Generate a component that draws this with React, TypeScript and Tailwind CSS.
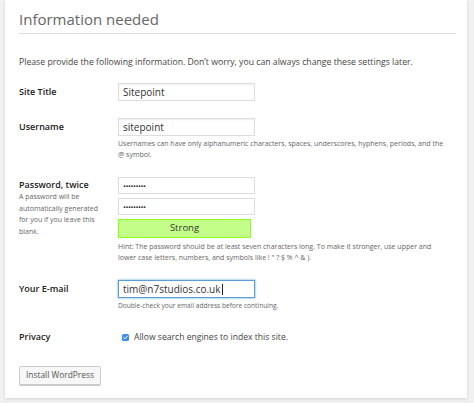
import React from 'react';

function Field({ value, focused }: { value: string; focused?: boolean }) {
  return (
    <div
      className={
        focused
          ? 'flex h-[18px] w-[137px] items-center border border-[#5b9dd9] bg-white px-[4px] text-[10px] text-[#333] shadow-[0_0_2px_rgba(30,140,190,0.8)]'
          : 'flex h-[18px] w-[137px] items-center border border-[#ddd] bg-white px-[4px] text-[10px] text-[#333] shadow-[inset_0_1px_2px_rgba(0,0,0,0.07)]'
      }
    >
      {value}
      {focused && <span className="ml-[1px] inline-block h-[11px] w-px bg-[#222]"></span>}
    </div>
  );
}

function Dots() {
  return (
    <div className="flex h-[17px] w-[137px] items-center border border-[#ddd] bg-white px-[4px] text-[8px] leading-none tracking-[-0.5px] text-[#333]">
      •••••••••
    </div>
  );
}

export default function App() {
  return (
    <div className="h-[403px] w-[474px] overflow-hidden bg-[#f1f1f1] font-['Open_Sans',sans-serif]">
      <div className="ml-[5px] h-[398px] w-[462px] bg-white pl-[14px] pr-[11px] shadow-[0_1px_3px_rgba(0,0,0,0.13)]">
        <h1 className="border-b border-[#dedede] pt-[9px] pb-[4px] text-[15px] leading-[20px] text-[#666]">
          Information needed
        </h1>
        <p className="mt-[22px] text-[8.7px] leading-[12px] text-[#444]">
          Please provide the following information. Don’t worry, you can always change these settings later.
        </p>

        <div className="mt-[15px] flex">
          <div className="w-[99px] pt-[3px] text-[9px] font-semibold leading-[12px] text-[#222]">Site Title</div>
          <Field value="Sitepoint" />
        </div>

        <div className="mt-[17px] flex">
          <div className="w-[99px] pt-[3px] text-[9px] font-semibold leading-[12px] text-[#222]">Username</div>
          <div>
            <Field value="sitepoint" />
            <p className="mt-[2px] whitespace-nowrap text-[7px] leading-[11px] text-[#666]">
              Usernames can have only alphanumeric characters, spaces, underscores, hyphens, periods, and the
              <br />@ symbol.
            </p>
          </div>
        </div>

        <div className="mt-[17px] flex">
          <div className="w-[99px] pt-[2px]">
            <div className="text-[9px] font-semibold leading-[12px] text-[#222]">Password, twice</div>
            <p className="whitespace-nowrap text-[7px] leading-[11.7px] text-[#666]">
              A password will be
              <br />
              automatically generated
              <br />
              for you if you leave this
              <br />
              blank.
            </p>
          </div>
          <div>
            <Dots />
            <div className="mt-[4px]">
              <Dots />
            </div>
            <div className="mt-[4px] flex h-[19px] w-[133px] items-center justify-center border border-[#8dff1c] bg-[#c3ff88] text-[9.5px] text-[#333]">
              Strong
            </div>
            <p className="mt-[3px] whitespace-nowrap text-[7px] leading-[11px] text-[#666]">
              Hint: The password should be at least seven characters long. To make it stronger, use upper and
              <br />
              lower case letters, numbers, and symbols like ! " ? $ % ^ &amp; ).
            </p>
          </div>
        </div>

        <div className="mt-[17px] flex">
          <div className="w-[99px] pt-[3px] text-[9px] font-semibold leading-[12px] text-[#222]">Your E-mail</div>
          <div>
            <Field value="tim@n7studios.co.uk" focused />
            <p className="mt-[2px] whitespace-nowrap text-[6.6px] leading-[11px] text-[#666]">
              Double-check your email address before continuing.
            </p>
          </div>
        </div>

        <div className="mt-[20px] flex items-center">
          <div className="w-[99px] text-[9px] font-semibold leading-[12px] text-[#222]">Privacy</div>
          <div className="flex items-center text-[8.6px] leading-[12px] text-[#444]">
            <span className="ml-[4px] mr-[5px] flex h-[7px] w-[7px] items-center justify-center rounded-[1.5px] bg-[#3c8ee8]">
              <svg width="5" height="5" viewBox="0 0 10 10" fill="none">
                <path d="M1.5 5.2 L4 7.6 L8.5 2.4" stroke="white" strokeWidth="2" strokeLinecap="round" strokeLinejoin="round" />
              </svg>
            </span>
            Allow search engines to index this site.
          </div>
        </div>

        <button className="mt-[23px] flex h-[19px] w-[82px] items-center justify-center rounded-[2px] border border-[#ccc] bg-[#f7f7f7] text-[8.4px] text-[#555] shadow-[0_1px_0_#ccc]">
          Install WordPress
        </button>
      </div>
    </div>
  );
}
